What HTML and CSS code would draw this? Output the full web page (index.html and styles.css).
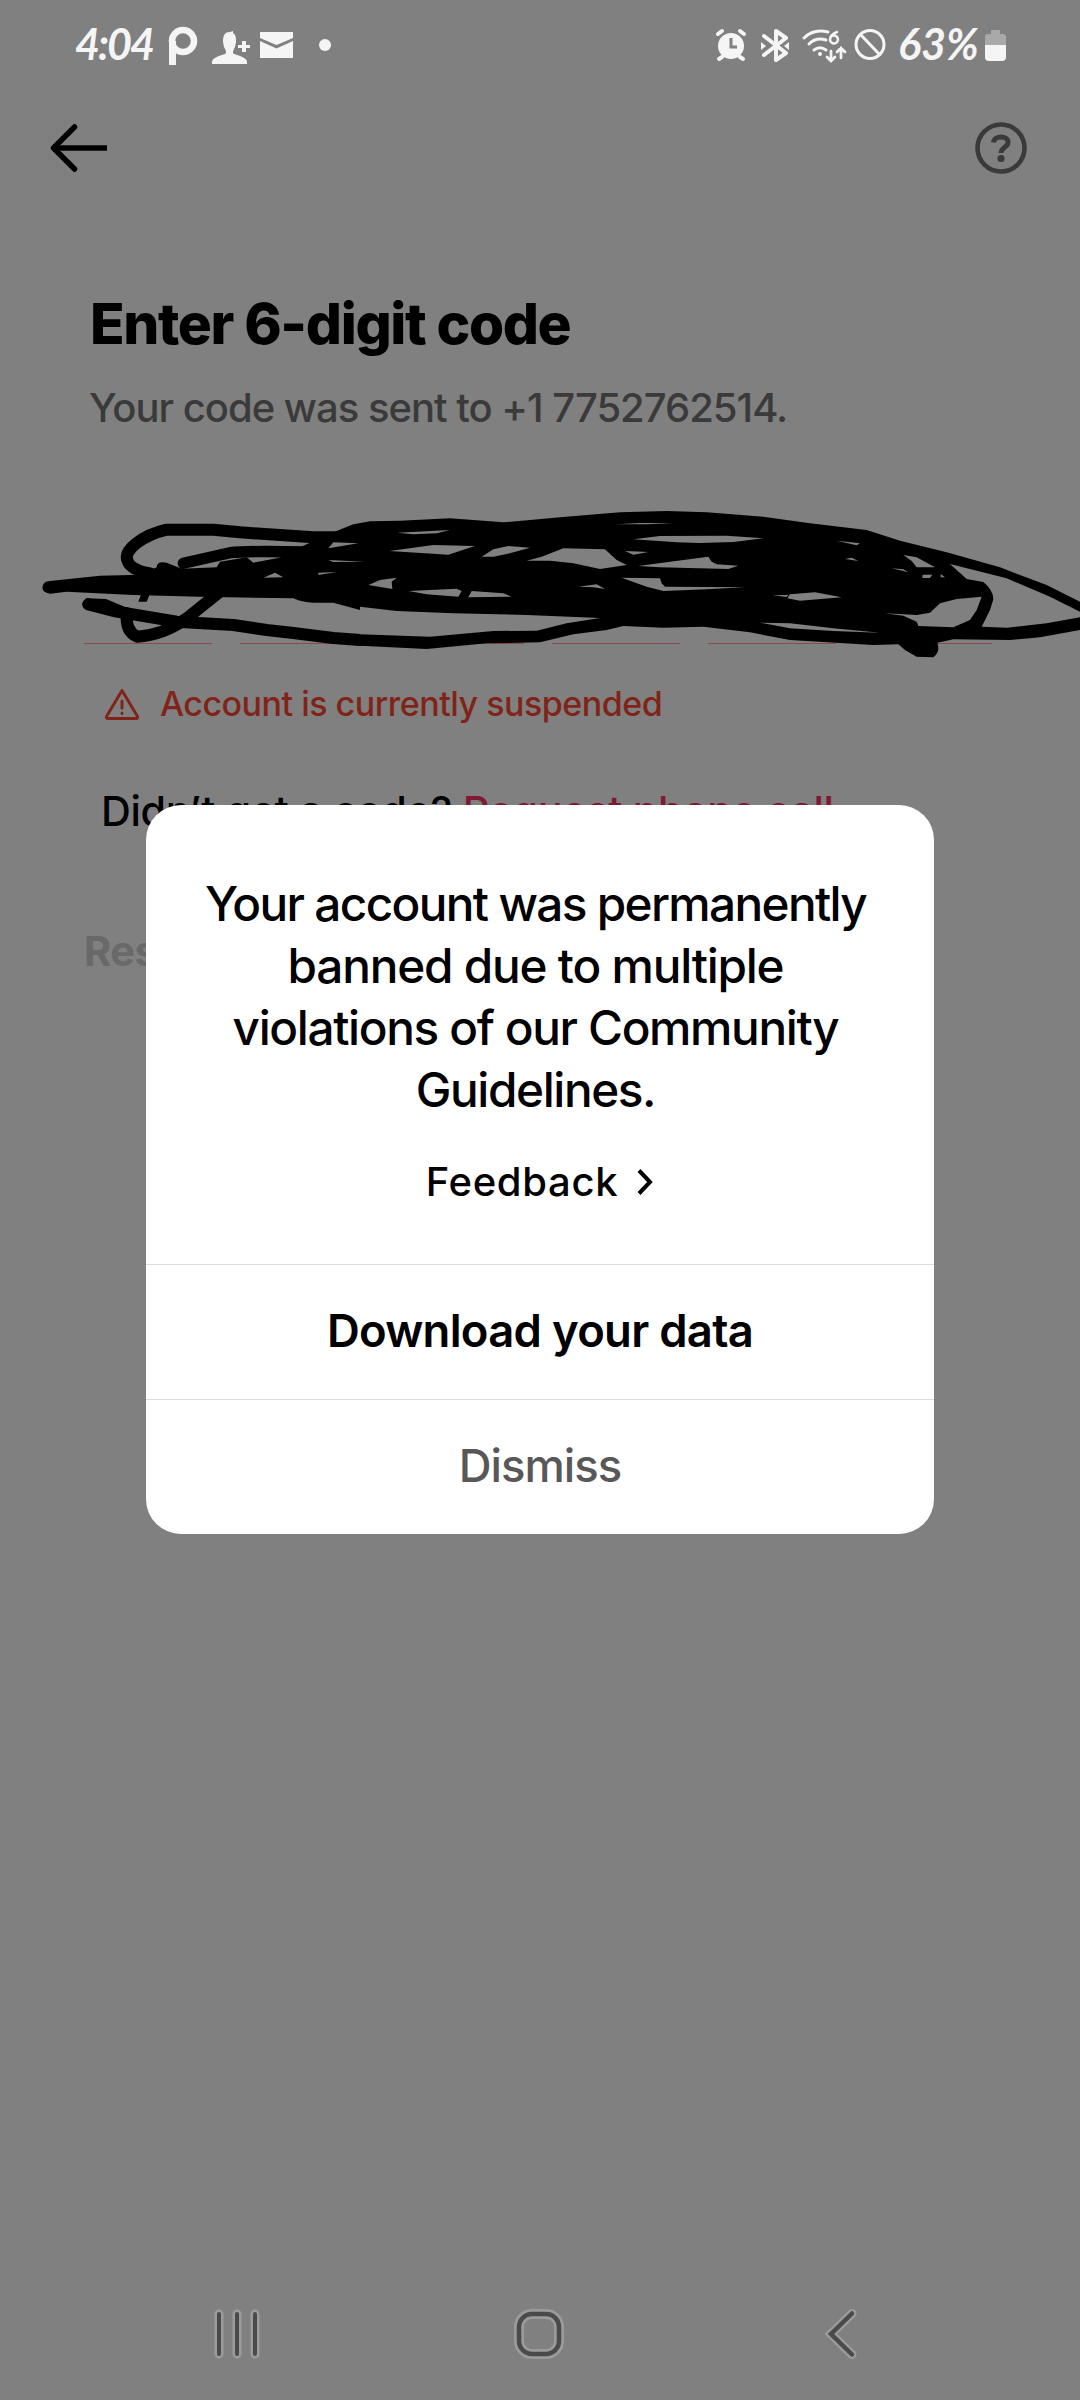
FILE: index.html
```html
<!DOCTYPE html>
<html lang="en">
<head>
<meta charset="utf-8">
<title>Enter 6-digit code</title>
<link rel="stylesheet" href="styles.css">
</head>
<body>
<div class="screen">
  <header class="status">
    <span class="clock">4:04</span>
    <svg class="status-left" width="166" height="44" viewBox="0 0 166 44" fill="#f5f5f5">
      <circle cx="16" cy="16" r="11" fill="none" stroke="#f5f5f5" stroke-width="6.5"/>
      <path d="M2 16h7v24H2z"/>
      <path d="M56 17c0-7 2-10 7-10l3-1v2c3 2 3 5 3 9l-1 5c-1 2-2 3-2 6l1 1c6 2 13 4 13 8v2H45v-2c0-4 7-6 13-8l1-1c0-3-1-4-2-6z"/>
      <path d="M75 16h4v4h4v3h-4v4h-4v-4h-4v-3h4z"/>
      <path d="M93 7h33v6l-16.500 7L93 13z"/>
      <path d="M93 16l16.500 7.500L126 16v17H93z"/>
      <circle cx="158" cy="20" r="6"/>
    </svg>
    <svg class="status-right" width="180" height="44" viewBox="0 0 180 44" fill="none" stroke="#f5f5f5" stroke-width="3" stroke-linecap="round">
      <circle cx="18" cy="22" r="13" fill="#f5f5f5" stroke="none"/>
      <path d="M5 10l4-3M31 10l-4-3M9 33l-3 2M27 33l3 2" stroke-width="4"/>
      <path d="M18 14v9h6" stroke="#808080" stroke-linecap="butt"/>
      <path d="M51 12l22 17-10 7V7l10 7-22 17" stroke-width="4" stroke-linejoin="round"/>
      <path d="M48 18l5 4-5 4zM76 18l-5 4 5 4z" fill="#f5f5f5" stroke="none"/>
      <path d="M91 14c7-7 16-8 24-6M96 20c5-5 11-6 17-4M101 26c4-3 8-3 12 0"/>
      <circle cx="107" cy="30" r="2" fill="#f5f5f5" stroke="none"/>
      <path d="M124 8c-5 2-7 5-7 8a4 4 0 1 0 2-4" stroke-width="2.500"/>
      <path d="M118 27v10m-4-4l4 4 4-4M128 34v-10m-4 4l4-4 4 4" stroke-width="2.700"/>
      <circle cx="157" cy="20.500" r="14"/>
      <path d="M147.500 10.500l19 20"/>
    </svg>
    <span class="percent">63%</span>
    <svg class="battery" width="21" height="31" viewBox="0 0 21 31">
      <path d="M6 0h9v4h3q3 0 3 3v8H0V7q0-3 3-3h3z" fill="#a9a9a9"/>
      <path d="M0 15h21v12q0 4-4 4H4q-4 0-4-4z" fill="#f5f5f5"/>
    </svg>
  </header>

  <nav class="appbar">
    <svg width="60" height="52" viewBox="0 0 60 52" fill="none" stroke="#000" stroke-width="5.500">
      <path d="M5 26h53"/>
      <path d="M25.500 5L4.500 26l21 21" stroke-linecap="round" stroke-linejoin="round"/>
    </svg>
    <svg width="52" height="52" viewBox="0 0 52 52" fill="none" stroke="#3a3a3a">
      <circle cx="26" cy="26" r="23.500" stroke-width="4.600"/>
      <path d="M18.500 20.500C19 13 33.500 13 33 20.500c-.3 5-7 4.500-7 10.500" stroke-width="5"/>
      <circle cx="26" cy="36.500" r="3.600" fill="#3a3a3a" stroke="none"/>
    </svg>
  </nav>

  <main class="content">
    <h1 class="title">Enter 6-digit code</h1>
    <p class="sub">Your code was sent to +1 7752762514.</p>
    <div class="cells"><i></i><i></i><i></i><i></i><i></i><i></i></div>
    <div class="error">
      <svg width="36" height="33" viewBox="0 0 36 33" fill="none" stroke="#80241a" stroke-width="3" stroke-linejoin="round" stroke-linecap="round">
        <path d="M18 2.500L2.500 28.500q-.5 2 1.500 2h28q2 0 1.500-2z"/>
        <path d="M18 13v7M18 25v.500"/>
      </svg>
      <span>Account is currently suspended</span>
    </div>
    <p class="call"><span class="ask">Didn’t get a code?</span> <span class="request">Request phone call</span></p>
    <p class="resend">Resend</p>
  </main>

  <footer class="navbar">
    <svg width="48" height="54" viewBox="0 0 48 54" fill="none" stroke-linecap="round">
      <path d="M6 7v40M24 7v40M42 7v40" stroke="#9b9b9b" stroke-width="9"/>
      <path d="M6 7v40M24 7v40M42 7v40" stroke="#4a4a4a" stroke-width="4"/>
    </svg>
    <svg class="home" width="54" height="54" viewBox="0 0 54 54" fill="none">
      <rect x="7" y="7" width="40" height="40" rx="13" stroke="#9b9b9b" stroke-width="10"/>
      <rect x="7" y="7" width="40" height="40" rx="13" stroke="#4a4a4a" stroke-width="4.500"/>
    </svg>
    <svg width="36" height="54" viewBox="0 0 36 54" fill="none" stroke-linecap="round">
      <path d="M28 6.500L7 27l21 20.500" stroke="#9b9b9b" stroke-width="9"/>
      <path d="M28 6.500L7 27l21 20.500" stroke="#4a4a4a" stroke-width="4.500"/>
    </svg>
  </footer>

  <svg class="scribble" width="1080" height="200" viewBox="0 0 3240 600">
    <g fill="none" stroke="#000" stroke-width="36" stroke-linecap="round" stroke-linejoin="round">
      <path d="M1050 172H940L720 157 640 149H500C430 165 370 210 382 240Q390 270 450 280"/>
      <path d="M550 250L690 218Q740 212 920 216L1000 222" stroke-width="34"/>
      <path d="M265 373L350 395 530 425 700 435 800 450 880 459 1000 474 1080 480"/>
      <path d="M380 400Q376 455 412 470 490 465 560 415L660 335"/>
    </g>
    <path d="M127 322Q130 303 150 303L200 298 300 287 420 284 470 262Q470 242 500 248L545 266 650 262 660 245 740 232 760 248 830 235 905 215 900 202 1000 157 1060 133 1110 124 1200 122 1350 115 1510 127 1680 112 1860 97 2000 93 2120 97 2290 110 2430 130 2600 150 2700 182 2840 217 3000 262 3140 315 3240 365V395L3150 350 3020 295 2850 252 2900 297 2950 306Q2980 330 2980 358L2970 390 2945 440 3020 443 3140 430 3240 412V450L3120 472 3030 480 2860 478 2812 488Q2822 515 2800 532L2750 530 2715 510 2695 493 2620 495 2370 480 2250 457 2110 440 1990 443 1870 438 1820 450 1720 463 1620 487 1460 490 1280 507 1080 497V390L1000 368Q960 368 940 368 910 368 880 355L600 350 400 345 200 335 150 341Q127 338 127 322z"/>
    <path d="M415 365h25l18-45h-26zM246 373l12-18 60 2 72 30-8 28-60-10-60-18z"/>
    <g fill="#808080">
      <path d="M1080 380L1190 393 1360 400 1580 405 1800 414 1700 430 1610 452 1480 453 1290 470 1080 463z"/>
      <path d="M2945 350L2870 357 2820 370 2790 398 2750 405 2655 400 2710 407 2750 425 2755 438 2860 442 2910 420 2930 390z"/>
      <path d="M2280 428L2370 430 2500 445 2640 458 2500 453 2370 445z"/>
      <path d="M1900 178L1980 168 2180 167 2290 175 2200 186 2100 189 2030 187z"/>
      <path d="M1850 133L1920 129 2020 129 1940 133z"/>
      <path d="M1915 258L2010 245 2125 230 2135 245 2150 253 2215 257 2185 267 1980 262z"/>
      <path d="M1875 213L1945 216 1900 224z"/>
      <path d="M1865 293L1980 295 1985 310 1995 320 2235 322 2120 328 1990 333 1940 320z"/>
      <path d="M1580 242L1625 230 1690 205 1815 208 1850 240 1880 255 1800 267 1720 250 1650 242z"/>
      <path d="M1445 230L1480 208 1525 198 1590 203 1520 222 1480 230z"/>
      <path d="M1168 213L1300 195 1425 198 1345 224z"/>
      <path d="M1192 158L1250 155 1350 150 1310 160 1240 163z"/>
      <path d="M1105 315L1140 300 1190 293 1175 305 1177 327z"/>
      <path d="M1225 333L1370 326 1385 333 1375 350 1280 343zM1415 333L1510 340 1535 350 1405 352z"/>
      <path d="M1735 320L1790 313 1815 327 1780 322z"/>
      <path d="M985 205L1075 190 1000 187zM985 240L1095 245 1000 246zM790 293L825 278 850 292zM955 278L1010 276 955 285z"/>
      <path d="M2510 182L2580 190 2570 196zM2535 237L2555 233 2575 243zM2710 225L2750 232 2805 262 2750 262 2735 243zM2675 265L2710 268 2725 277zM2768 284L2797 284 2790 294 2767 294zM2822 282L2835 292 2822 292z"/>
      <path d="M2318 346L2365 345 2360 351zM2370 343L2445 337 2525 352 2400 362 2362 355z"/>
    </g>
  </svg>

  <section class="dialog">
    <div class="message">
      <span class="m1">Your account was permanently</span>
      <span class="m2">banned due to multiple</span>
      <span class="m3">violations of our Community</span>
      <span class="m4">Guidelines.</span>
    </div>
    <div class="feedback">
      <span>Feedback</span>
      <svg width="18" height="28" viewBox="0 0 18 28" fill="none" stroke="#000" stroke-width="4"><path d="M3 2.500L14 14 3 25.500"/></svg>
    </div>
    <div class="action download"><span>Download your data</span></div>
    <div class="action dismiss"><span>Dismiss</span></div>
  </section>
</div>
</body>
</html>
```
FILE: styles.css
```css
* { box-sizing: border-box; }
body { margin: 0; background: #808080; font-family: Inter, Roboto, "Liberation Sans", sans-serif; color: #000; }
h1, p { margin: 0; white-space: nowrap; }
svg { display: block; flex: none; }
.screen { position: relative; width: 1080px; height: 2400px; overflow: hidden; background: #808080; display: flex; flex-direction: column; }

.status { height: 90px; padding: 24px 74px 0 75px; display: flex; align-items: flex-start; color: #f5f5f5; }
.clock, .percent { font-family: Lato, sans-serif; font-style: italic; font-weight: 700; font-size: 43px; line-height: 40px; white-space: nowrap; }
.clock { width: 92px; letter-spacing: -2px; }
.status-left { margin-top: 1px; }
.status-right { margin-left: 380px; }
.percent { width: 84px; margin-left: 5px; letter-spacing: 0; }
.battery { margin: 6px 0 0 auto; }

.appbar { height: 116px; padding: 0 53px 0 49px; display: flex; align-items: center; justify-content: space-between; }

.content { padding: 83px 88px 0 84px; flex: 1; }
.title { margin-left: 6px; font-size: 56.8px; line-height: 70px; font-weight: 800; letter-spacing: -1.35px; }
.sub { margin: 24px 0 0 5px; font-size: 40px; line-height: 50px; font-weight: 450; color: #3a3a3a; letter-spacing: -1px; }
.cells { height: 211px; display: flex; gap: 28px; }
.cells i { flex: 1; border-bottom: 1px solid #844e50; }
.error { margin: 38px 0 0 20px; height: 44px; display: flex; align-items: center; gap: 20px; font-size: 34px; line-height: 44px; font-weight: 500; color: #80241a; white-space: nowrap; letter-spacing: -0.5px; }
.call { margin: 59px 0 0 17px; font-size: 41.3px; line-height: 52px; font-weight: 500; letter-spacing: -0.3px; }
.request { color: #7f1a33; }
.resend { margin-top: 88px; font-size: 41.5px; line-height: 52px; font-weight: 700; color: #696969; letter-spacing: -0.5px; }

.navbar { height: 133px; padding: 0 220px 0 213px; display: flex; align-items: center; justify-content: space-between; }
.home { margin-right: 8px; }

.scribble { position: absolute; left: 0; top: 480px; }

.dialog { position: absolute; left: 146px; top: 805px; width: 788px; height: 729px; border-radius: 35px; background: #fff; padding-top: 68px; overflow: hidden; }
.message { padding-right: 9px; display: flex; flex-direction: column; align-items: center; font-size: 47.7px; line-height: 62px; font-weight: 500; white-space: nowrap; }
.m1 { letter-spacing: -1.65px; }
.m2 { letter-spacing: -1.2px; }
.m3 { letter-spacing: -1.35px; }
.m4 { letter-spacing: -1.4px; }
.feedback { height: 143px; padding-top: 36px; display: flex; justify-content: center; gap: 18px; font-size: 40px; line-height: 50px; font-weight: 500; letter-spacing: 0.7px; }
.feedback svg { margin-top: 11px; }
.action { height: 135px; padding-bottom: 3px; border-top: 1px solid #dcdcdc; display: flex; align-items: center; justify-content: center; font-size: 45.4px; }
.download { font-weight: 600; letter-spacing: -0.7px; }
.dismiss { color: #585858; font-weight: 450; letter-spacing: -1px; }
```
